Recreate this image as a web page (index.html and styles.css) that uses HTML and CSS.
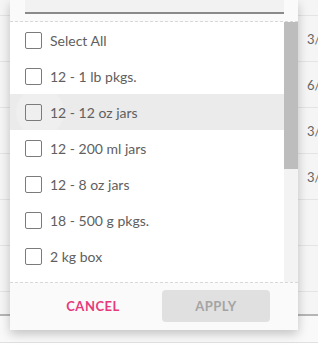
FILE: index.html
```html
<!DOCTYPE html>
<html lang="en">
<head>
  <meta charset="UTF-8">
  <meta name="viewport" content="width=device-width, initial-scale=1.0">
  <title>Filter</title>
  <link rel="stylesheet" href="styles.css">
</head>
<body>

<div class="page">
  <div class="grid">
    <div class="grid-row"><span></span><span class="cell"></span></div>
    <div class="grid-row"><span></span><span class="cell">3/</span></div>
    <div class="grid-row"><span></span><span class="cell">6/</span></div>
    <div class="grid-row"><span></span><span class="cell">3/</span></div>
    <div class="grid-row"><span></span><span class="cell">3/</span></div>
    <div class="grid-row"><span></span><span class="cell"></span></div>
    <div class="grid-row"><span></span><span class="cell"></span></div>
  </div>
  <div class="grid-foot"></div>

  <div class="popup">
    <div class="popup-head">
      <div class="search"></div>
    </div>
    <div class="list-wrap">
      <ul class="options">
        <li class="option"><span class="box"></span><span class="label">Select All</span></li>
        <li class="option"><span class="box"></span><span class="label">12 - 1 lb pkgs.</span></li>
        <li class="option hover"><span class="box"></span><span class="label">12 - 12 oz jars</span></li>
        <li class="option"><span class="box"></span><span class="label">12 - 200 ml jars</span></li>
        <li class="option"><span class="box"></span><span class="label">12 - 8 oz jars</span></li>
        <li class="option"><span class="box"></span><span class="label">18 - 500 g pkgs.</span></li>
        <li class="option"><span class="box"></span><span class="label">2 kg box</span></li>
      </ul>
      <div class="scrollbar"><div class="thumb"></div></div>
    </div>
    <div class="popup-foot">
      <button class="btn btn-cancel">CANCEL</button>
      <button class="btn btn-apply" disabled>APPLY</button>
    </div>
  </div>
</div>

</body>
</html>
```

FILE: styles.css
```css
body {
  margin: 0;
  font-family: Lato, "Open Sans", sans-serif;
  background-color: #fff;
  overflow: hidden;
}
.page {
  position: relative;
  width: 318px;
  height: 345px;
}
.grid {
  height: 314px;
  overflow: hidden;
  background-color: #f5f5f5;
  border-bottom: 2px solid #b5b5b5;
}
.grid-row {
  display: grid;
  grid-template-columns: 307px 1fr;
  align-items: center;
  height: 45px;
  border-bottom: 1px solid #e4e4e4;
  color: #666;
  font-size: 13px;
  white-space: nowrap;
}
.grid-row:first-child {
  height: 15px;
}
.grid-foot {
  height: 26px;
  background-color: #f9f9f9;
  border-bottom: 1px solid #e0e0e0;
}

/* filter popup */
.popup {
  position: absolute;
  left: 10px;
  top: 0;
  width: 288px;
  background-color: #fafafa;
  box-shadow: 0 4px 10px rgba(0, 0, 0, 0.22);
}
.popup-head {
  height: 21px;
  padding: 0 14px 0 15px;
  border-bottom: 1px dashed #d8d8d8;
}
.search {
  height: 12px;
  background-color: #f2f2f2;
  border-bottom: 2px solid #8a8a8a;
}
.list-wrap {
  display: flex;
  height: 260px;
}
.options {
  flex: 1;
  list-style: none;
  margin: 0;
  padding: 0;
  overflow: hidden;
  background-color: #fff;
}
.scrollbar {
  width: 14px;
  background-color: #f3f3f3;
}
.thumb {
  height: 147px;
  background-color: #bdbdbd;
}
.option {
  position: relative;
  display: flex;
  align-items: center;
  gap: 8px;
  height: 36px;
  padding-left: 15px;
  overflow: hidden;
  color: #606060;
  font-size: 14px;
}
.option.hover {
  background-color: #ebebeb;
}
.option.hover::before {
  content: "";
  position: absolute;
  left: 6px;
  top: -6px;
  width: 48px;
  height: 48px;
  border-radius: 50%;
  background-color: #efefef;
}
.box {
  position: relative;
  width: 15px;
  height: 15px;
  border: 1px solid #7b7b7b;
  border-radius: 2px;
  background-color: #fff;
  flex-shrink: 0;
}
.label {
  position: relative;
}
.option.hover .box {
  background-color: transparent;
}
.popup-foot {
  display: grid;
  grid-template-columns: 108px 108px;
  gap: 15px;
  padding: 7px 28px 8px 29px;
  border-top: 1px dashed #d8d8d8;
}
.btn {
  height: 32px;
  border: none;
  border-radius: 4px;
  font-family: inherit;
  font-size: 13px;
  font-weight: bold;
  letter-spacing: 0.5px;
  background: none;
}
.btn-cancel {
  color: #e8387c;
}
.btn-apply {
  background-color: #e0e0e0;
  color: #a4a4a4;
}
```
